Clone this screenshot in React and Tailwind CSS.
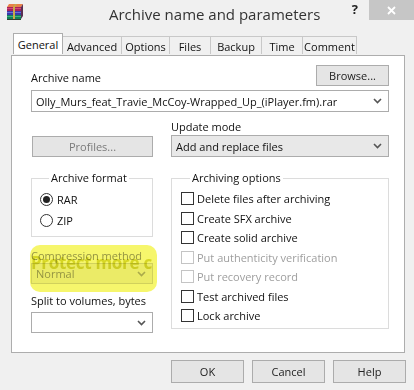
import React from 'react';

const Chevron = ({ color = '#444' }) => (
    <svg width="9" height="6" viewBox="0 0 9 6" className="shrink-0">
        <path d="M1 1 L4.5 4.5 L8 1" fill="none" stroke={color} strokeWidth="1.6" />
    </svg>
);

function WinRarIcon() {
    return (
        <svg width="18" height="18" viewBox="0 0 18 18">
            {/* top faces */}
            <polygon points="3,1 17,1 15,4 1,4" fill="#e8804a" />
            {/* books */}
            <rect x="1" y="4" width="14" height="4" fill="#a8205c" />
            <rect x="1" y="5" width="14" height="1" fill="#d04a7a" />
            <rect x="1" y="8" width="14" height="4" fill="#3a3aa8" />
            <rect x="1" y="9" width="14" height="1" fill="#6a70d8" />
            <rect x="1" y="12" width="14" height="4" fill="#10805a" />
            <rect x="1" y="13" width="14" height="1" fill="#40b080" />
            {/* spine side */}
            <polygon points="15,4 17,1 17,13 15,16" fill="#5a3050" />
            {/* strap */}
            <rect x="7" y="4" width="2" height="12" fill="#c9a84a" />
            <polygon points="9,1 11,1 9,4 7,4" fill="#c9a84a" />
            <rect x="1" y="16" width="14" height="1" fill="#304030" />
        </svg>
    );
}

function Tab({ label, width, active }) {
    if (active) {
        return (
            <div className={`${width} h-[21px] -mb-px bg-white border border-b-0 border-[#adadad] flex items-start justify-center pt-[3px] relative z-10`}>
                {label}
            </div>
        );
    }
    return (
        <div className={`${width} h-[18px] mt-[3px] bg-[#f0f0f0] border border-b-0 border-l-0 border-[#c8c8c8] flex items-start justify-center pt-[2px]`}>
            {label}
        </div>
    );
}

function Button({ children, className = '', disabled }) {
    return (
        <div
            className={`h-[21px] border border-[#acacac] bg-[#e5e5e5] flex items-center justify-center ${disabled ? 'text-[#7a7a7a]' : 'text-[#222]'} ${className}`}
        >
            {children}
        </div>
    );
}

function Combo({ value, className = '', grey, disabled }) {
    return (
        <div
            className={`h-[21px] border flex items-center justify-between pl-[4px] pr-[6px] ${
                grey ? 'bg-[#e8e8e8] border-[#acacac]' : disabled ? 'bg-[#f4f4f4] border-[#d9d9d9]' : 'bg-white border-[#acacac]'
            } ${disabled ? 'text-[#9a9a9a]' : 'text-[#111]'} ${className}`}
        >
            <span className="truncate">{value}</span>
            <Chevron color={disabled ? '#b0b0b0' : '#555'} />
        </div>
    );
}

function Radio({ label, checked }) {
    return (
        <div className="h-[21px] flex items-center gap-[4px]">
            <div className="w-[13px] h-[13px] rounded-full border border-[#333] bg-white flex items-center justify-center">
                {checked && <div className="w-[7px] h-[7px] rounded-full bg-[#222]" />}
            </div>
            <span>{label}</span>
        </div>
    );
}

function Check({ label, disabled }) {
    return (
        <div className={`h-[19.5px] flex items-center gap-[3px] ${disabled ? 'text-[#9e9e9e]' : 'text-[#111]'}`}>
            <div className={`w-[13px] h-[13px] border bg-white ${disabled ? 'border-[#c4c4c4]' : 'border-[#333]'}`} />
            <span>{label}</span>
        </div>
    );
}

export default function App() {
    const tabs = [
        { label: 'General', width: 'w-[50px]', active: true },
        { label: 'Advanced', width: 'w-[59px]' },
        { label: 'Options', width: 'w-[48px]' },
        { label: 'Files', width: 'w-[41px]' },
        { label: 'Backup', width: 'w-[51px]' },
        { label: 'Time', width: 'w-[41px]' },
        { label: 'Comment', width: 'w-[54px]' },
    ];

    const options = [
        { label: 'Delete files after archiving' },
        { label: 'Create SFX archive' },
        { label: 'Create solid archive' },
        { label: 'Put authenticity verification', disabled: true },
        { label: 'Put recovery record', disabled: true },
        { label: 'Test archived files' },
        { label: 'Lock archive' },
    ];

    return (
        <div className="w-[414px] h-[390px] bg-[#f0f0f0] relative overflow-hidden font-['Open_Sans',sans-serif] text-[11px] leading-[15px] text-[#111]">
            {/* Title bar */}
            <div className="h-[33px] flex items-start">
                <div className="ml-[6px] mt-[3px]">
                    <WinRarIcon />
                </div>
                <div className="flex-1 pl-[85px] pt-[4px] text-[15px] leading-[20px] text-[#333]">
                    Archive name and parameters
                </div>
                <div className="pt-[2px] pr-[11px] text-[13px] font-bold text-[#222]">?</div>
                <div className="w-[45px] h-[20px] bg-[#c6c6c6] flex items-center justify-center">
                    <svg width="9" height="9" viewBox="0 0 9 9">
                        <path d="M1 1 L8 8 M8 1 L1 8" stroke="white" strokeWidth="1.8" />
                    </svg>
                </div>
            </div>

            {/* Tabs */}
            <div className="ml-[13px] flex items-start h-[22px]">
                {tabs.map((t) => (
                    <Tab key={t.label} {...t} />
                ))}
            </div>

            {/* Panel */}
            <div className="ml-[11px] w-[394px] h-[298px] bg-white border border-[#adadad] pt-[9px] pl-[19px]">
                <div className="w-[358px] flex flex-col">
                    <div className="flex justify-between items-end">
                        <span className="mb-[1px]">Archive name</span>
                        <Button className="w-[73px]">Browse...</Button>
                    </div>
                    <Combo className="mt-[4px] h-[22px]" value="Olly_Murs_feat_Travie_McCoy-Wrapped_Up_(iPlayer.fm).rar" />

                    <div className="mt-[7px] grid grid-cols-[122px_218px] gap-x-[18px] items-end">
                        <Button className="w-[121px] ml-[1px]" disabled>Profiles...</Button>
                        <div className="flex flex-col">
                            <span className="mb-[1px]">Update mode</span>
                            <Combo grey className="h-[22px]" value="Add and replace files" />
                        </div>
                    </div>

                    <div className="mt-[14px] grid grid-cols-[122px_218px] gap-x-[18px] items-start">
                        <div className="flex flex-col">
                            <fieldset className="border border-[#dcdcdc] pl-[8px] pt-[4px] pb-[5px] h-[66px]">
                                <legend className="ml-[9px] px-[2px] leading-[14px]">Archive format</legend>
                                <Radio label="RAR" checked />
                                <Radio label="ZIP" />
                            </fieldset>
                            <span className="mt-[11px] text-[#9a9a9a]">Compression method</span>
                            <Combo disabled value="Normal" />
                            <span className="mt-[9px]">Split to volumes, bytes</span>
                            <Combo className="mt-[4px]" value="" />
                        </div>
                        <fieldset className="border border-[#dcdcdc] pl-[9px] pt-[4px] h-[158px]">
                            <legend className="ml-[9px] px-[2px] leading-[14px]">Archiving options</legend>
                            {options.map((o) => (
                                <Check key={o.label} {...o} />
                            ))}
                        </fieldset>
                    </div>
                </div>
            </div>

            {/* Bottom buttons */}
            <div className="mt-[7px] pr-[8px] flex justify-end gap-[8px]">
                <Button className="w-[73px] h-[23px]">OK</Button>
                <Button className="w-[73px] h-[23px]">Cancel</Button>
                <Button className="w-[73px] h-[23px]">Help</Button>
            </div>

            {/* Highlighter mark over compression method */}
            <div className="absolute left-[30px] top-[245px] w-[127px] h-[47px] rounded-[10px] bg-[#f6f66c] mix-blend-multiply overflow-hidden">
                <div className="pl-[1px] pt-[8px] text-[17px] leading-[20px] font-bold tracking-[-0.3px] text-[#d6d624] whitespace-nowrap">
                    Protect more c
                </div>
            </div>
        </div>
    );
}
